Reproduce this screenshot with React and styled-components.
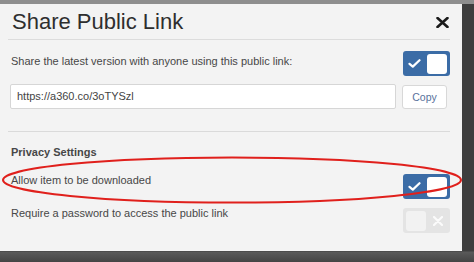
import React from 'react';
import styled, { createGlobalStyle } from 'styled-components';

const GlobalStyle = createGlobalStyle`
  html, body {
    margin: 0;
    padding: 0;
    background: #3c3c3c;
    font-family: "Liberation Sans", Arial, sans-serif;
  }
`;

const Page = styled.div`
  width: 474px;
  height: 262px;
  overflow: hidden;
  background: linear-gradient(to bottom, #8e8e8e 0, #8e8e8e 4px, #3e3e3e 4px, #3e3e3e 251px, #5a5a5a 252px, #444 262px);
  padding-top: 4px;
  box-sizing: border-box;
`;

const Panel = styled.div`
  position: relative;
  width: 462px;
  height: 247px;
  background: #f3f3f3;
  box-sizing: border-box;
  padding: 0 12px 0 11px;
`;

const Header = styled.div`
  height: 35px;
  display: flex;
  align-items: center;
  justify-content: space-between;
  margin-left: -3px;
  padding-left: 4px;
  border-bottom: 1px solid #dcdcdc;
`;

const Title = styled.h1`
  margin: 0;
  font-size: 22px;
  font-weight: 400;
  color: #2e2e2e;
  line-height: 24px;
  padding-top: 1px;
`;

const Close = styled.button`
  border: 0;
  background: none;
  padding: 0;
  width: 13px;
  height: 11px;
  display: flex;
  margin-top: 2px;
  margin-right: 1px;
`;

const Row = styled.div`
  display: flex;
  justify-content: space-between;
  align-items: flex-start;
  margin-top: ${p => p.$top || 0}px;
`;

const Label = styled.div`
  font-size: 11px;
  color: #474747;
  line-height: 13px;
  margin-top: ${p => p.$pad || 0}px;
  font-weight: ${p => (p.$bold ? 700 : 400)};
`;

const Toggle = styled.div`
  width: 47px;
  height: 25px;
  border-radius: 3px;
  box-sizing: border-box;
  display: flex;
  align-items: center;
  justify-content: space-between;
  padding: 0 3px 0 5px;
  background: ${p => (p.$on ? '#3b6ca6' : '#e4e4e4')};
  flex-direction: ${p => (p.$on ? 'row' : 'row-reverse')};
  ${p => !p.$on && 'padding: 0 7px 0 3px;'}
`;

const Knob = styled.div`
  width: 20px;
  height: 20px;
  border-radius: 3px;
  background: ${p => (p.$on ? '#ffffff' : '#f2f2f2')};
`;

const LinkRow = styled.div`
  display: flex;
  gap: 6px;
  margin-top: 8px;
  margin-left: -1px;
  padding-right: 3px;
`;

const LinkInput = styled.div`
  flex: 1;
  height: 25px;
  box-sizing: border-box;
  background: #fff;
  border: 1px solid #d6d6d6;
  border-radius: 2px;
  font-size: 11px;
  color: #444;
  line-height: 23px;
  padding-left: 6px;
`;

const CopyButton = styled.div`
  width: 45px;
  height: 24px;
  box-sizing: border-box;
  background: #fff;
  border: 1px solid #d8d8d8;
  border-radius: 3px;
  font-size: 10.5px;
  color: #58729c;
  display: flex;
  align-items: center;
  justify-content: center;
  margin-top: 1px;
`;

const Divider = styled.div`
  height: 1px;
  background: #dadada;
  margin: ${p => p.$top}px 0 0 -3px;
`;

const Circle = styled.svg`
  position: absolute;
  left: 0;
  top: -4px;
  pointer-events: none;
`;

const Check = () => (
  <svg width="13" height="9" viewBox="0 0 13 9">
    <path d="M1.5 4.8 L4.8 7.6 L11.5 1.2" fill="none" stroke="#fff" strokeWidth="2.2" strokeLinecap="round" strokeLinejoin="round" />
  </svg>
);

const Cross = () => (
  <svg width="10" height="10" viewBox="0 0 10 10">
    <path d="M1 1 L9 9 M9 1 L1 9" fill="none" stroke="#fbfbfb" strokeWidth="2.2" strokeLinecap="round" />
  </svg>
);

const Switch = ({ on }) => (
  <Toggle $on={on}>
    {on ? <Check /> : <Cross />}
    <Knob $on={on} />
  </Toggle>
);

const App = () => (
  <>
    <GlobalStyle />
    <Page>
      <Panel>
        <Header>
          <Title>Share Public Link</Title>
          <Close aria-label="Close">
            <svg width="13" height="11" viewBox="0 0 13 11">
              <path d="M1.5 1 L11.5 10 M11.5 1 L1.5 10" fill="none" stroke="#1a1a1a" strokeWidth="2.6" strokeLinecap="round" />
            </svg>
          </Close>
        </Header>

        <Row $top={11}>
          <Label $pad={4}>Share the latest version with anyone using this public link:</Label>
          <Switch on />
        </Row>

        <LinkRow>
          <LinkInput>https://a360.co/3oTYSzl</LinkInput>
          <CopyButton>Copy</CopyButton>
        </LinkRow>

        <Divider $top={22} />

        <Row $top={14}>
          <Label $bold>Privacy Settings</Label>
        </Row>

        <Row $top={15}>
          <Label $pad={0}>Allow item to be downloaded</Label>
          <Switch on />
        </Row>

        <Row $top={9}>
          <Label $pad={-1}>Require a password to access the public link</Label>
          <Switch on={false} />
        </Row>

        <Circle width="466" height="250" viewBox="0 0 466 250">
          <ellipse cx="232" cy="180" rx="229" ry="22.5" fill="none" stroke="#e0201c" strokeWidth="2" />
        </Circle>
      </Panel>
    </Page>
  </>
);

export default App;
